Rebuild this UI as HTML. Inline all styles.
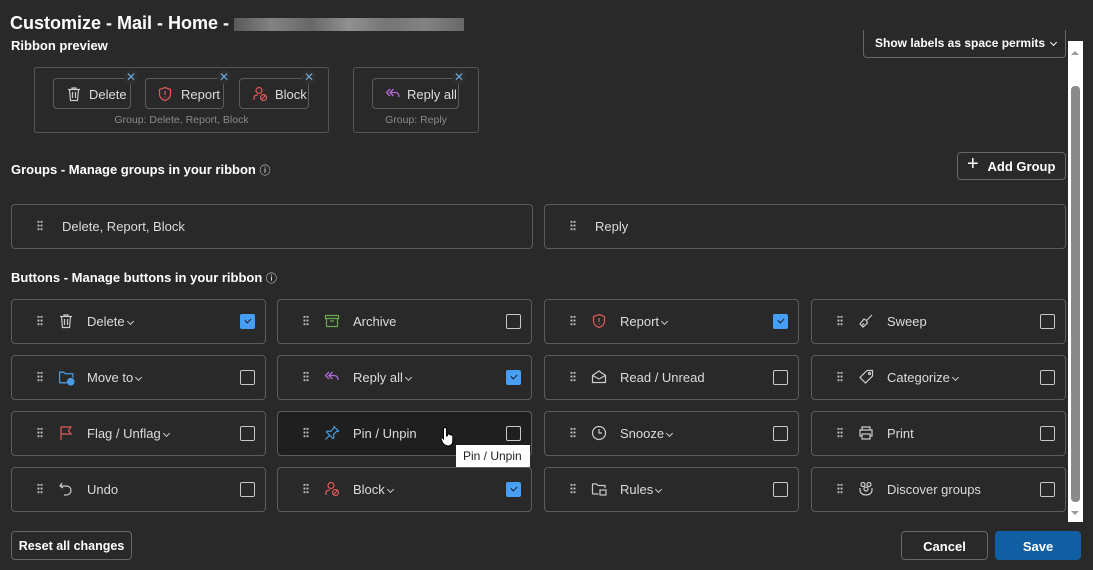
<!DOCTYPE html>
<html><head><meta charset="utf-8"><style>
*{box-sizing:border-box}
body{margin:0;width:1093px;height:570px;background:#292929;font-family:"Liberation Sans",sans-serif;color:#e8e8e8;overflow:hidden;position:relative}
.a{position:absolute}
.card{position:absolute;border:1px solid #5c5c5c;border-radius:4px;height:45px;width:255px;font-size:13px;color:#dcdcdc}
.card .g{position:absolute;left:25px;top:15px;width:6px;height:11px;background-image:radial-gradient(circle,#bbb 1px,transparent 1.2px);background-size:3px 3.7px}
.card svg{position:absolute;left:46px;top:13px}
.card .t{position:absolute;left:75px;top:14px}
.cb{position:absolute;right:10px;top:14px;width:15px;height:15px;border:1px solid #c8c8c8;border-radius:2px}
.cb.on{background:#479ef5;border-color:#479ef5}
.cb.on:after{content:"";position:absolute;left:4px;top:3px;width:5px;height:3px;border-left:1.5px solid #1a1a1a;border-bottom:1.5px solid #1a1a1a;transform:rotate(-45deg)}
.chev{display:inline-block;width:5px;height:5px;border-right:1px solid #ccc;border-bottom:1px solid #ccc;transform:rotate(45deg);margin:0 0 3px 3px;vertical-align:middle}
.h{position:absolute;font-weight:bold;font-size:13px;color:#fff}
.pb{position:absolute;height:31px;top:78px;border:1px solid #5c5c5c;border-radius:4px;font-size:13px;color:#ddd;padding:8px 0 0 0}
.x{position:absolute;top:-9px;right:-8px;width:14px;height:14px;color:#6fa8dc;font-size:12px;text-align:center;line-height:14px;background:#2f2f2f;border-radius:7px}
.btn{position:absolute;border:1px solid #666;border-radius:4px;font-size:13px;font-weight:bold;color:#fff;text-align:center}
</style></head><body>
<div class="a" style="left:10px;top:13px;font-size:18px;font-weight:bold;color:#fff">Customize - Mail - Home - <span style="display:inline-block;width:230px;height:13px;background:linear-gradient(90deg,#666,#999,#777,#aaa,#888,#999,#777);vertical-align:middle;opacity:.8"></span></div>
<div class="h" style="left:11px;top:38px">Ribbon preview</div>
<div class="a" style="left:863px;top:30px;width:203px;height:28px;border:1px solid #666;border-top:none;border-radius:0 0 4px 4px;font-size:12px;font-weight:bold;color:#fff;padding:6px 0 0 11px">Show labels as space permits <span class="chev" style="border-color:#fff"></span></div>

<div class="a" style="left:34px;top:67px;width:295px;height:66px;border:1px solid #555;border-radius:3px"></div>
<div class="a" style="left:34px;top:114px;width:295px;text-align:center;font-size:10.5px;color:#8a8a8a">Group: Delete, Report, Block</div>
<div class="a" style="left:353px;top:67px;width:126px;height:66px;border:1px solid #555;border-radius:3px"></div>
<div class="a" style="left:353px;top:114px;width:126px;text-align:center;font-size:10.5px;color:#8a8a8a">Group: Reply</div>
<div class="pb" style="left:53px;width:78px;top:78px"><svg class="a" style="left:12px;top:7px" width="16" height="16" viewBox="0 0 16 16" fill="none" stroke="#ccc" stroke-width="1.2"><path d="M2 3.5h12M6 3.5V2h4v1.5M3.5 3.5l1 11h7l1-11M6.5 6v6M9.5 6v6"/></svg><span style="position:absolute;left:35px">Delete</span><div class="x">✕</div></div>
<div class="pb" style="left:145px;width:79px"><svg class="a" style="left:11px;top:7px" width="16" height="16" viewBox="0 0 16 16" fill="none" stroke="#e05a5a" stroke-width="1.2"><path d="M8 1.5l5.5 2v4.5c0 3.5-2.5 5.5-5.5 6.5C5 13.5 2.5 11.5 2.5 8V3.5z M8 5v4M8 10.5v1"/></svg><span style="position:absolute;left:35px">Report</span><div class="x">✕</div></div>
<div class="pb" style="left:239px;width:70px"><svg class="a" style="left:12px;top:7px" width="16" height="16" viewBox="0 0 16 16" fill="none" stroke="#e05a5a" stroke-width="1.2"><circle cx="7" cy="4.5" r="3"/><path d="M2 14v-2c0-2 1.5-3 4-3"/><circle cx="11.5" cy="11.5" r="3"/><path d="M9.5 13.5l4-4"/></svg><span style="position:absolute;left:35px">Block</span><div class="x">✕</div></div>
<div class="pb" style="left:372px;width:87px"><svg class="a" style="left:12px;top:7px" width="16" height="16" viewBox="0 0 16 16" fill="none" stroke="#b36ad6" stroke-width="1.3"><path d="M5 3L1.5 6.5 5 10M8.5 3L5 6.5l3.5 3.5M5 6.5h5c2.5 0 4 1.5 4 4.5"/></svg><span style="position:absolute;left:34px">Reply all</span><div class="x">✕</div></div>

<div class="h" style="left:11px;top:162px">Groups - Manage groups in your ribbon <span style="font-weight:normal;font-size:11px">ⓘ</span></div>
<div class="btn" style="left:957px;top:152px;width:109px;height:28px;padding-top:6px"><span style="font-weight:normal;font-size:20px;position:absolute;left:9px;top:0px">+</span><span style="margin-left:20px">Add Group</span></div>
<div class="card" style="left:11px;top:204px;width:522px"><div class="g"></div><span class="t" style="left:50px">Delete, Report, Block</span></div>
<div class="card" style="left:544px;top:204px;width:522px"><div class="g"></div><span class="t" style="left:50px">Reply</span></div>

<div class="h" style="left:11px;top:270px">Buttons - Manage buttons in your ribbon <span style="font-weight:normal;font-size:11px">ⓘ</span></div>

<div class="card" style="left:11px;top:299px"><div class="g"></div><svg width="16" height="16" viewBox="0 0 16 16" fill="none" stroke="#ccc" stroke-width="1.2"><path d="M2 3.5h12M6 3.5V2h4v1.5M3.5 3.5l1 11h7l1-11M6.5 6v6M9.5 6v6"/></svg><span class="t">Delete<span class="chev"></span></span><div class="cb on"></div></div>
<div class="card" style="left:277px;top:299px"><div class="g"></div><svg width="16" height="16" viewBox="0 0 16 16" fill="none" stroke="#6aa84f" stroke-width="1.2"><path d="M1.5 2.5h13v3h-13zM2.5 5.5v8h11v-8M6 8h4"/></svg><span class="t">Archive</span><div class="cb"></div></div>
<div class="card" style="left:544px;top:299px"><div class="g"></div><svg width="16" height="16" viewBox="0 0 16 16" fill="none" stroke="#e05a5a" stroke-width="1.2"><path d="M8 1.5l5.5 2v4.5c0 3.5-2.5 5.5-5.5 6.5C5 13.5 2.5 11.5 2.5 8V3.5z M8 5v4M8 10.5v1"/></svg><span class="t">Report<span class="chev"></span></span><div class="cb on"></div></div>
<div class="card" style="left:811px;top:299px"><div class="g"></div><svg width="16" height="16" viewBox="0 0 16 16" fill="none" stroke="#ccc" stroke-width="1.2"><path d="M14 2L8.5 7.5M8.5 7.5L6 6 2 11l3 3 4.5-4z M4 12.5l2-2"/></svg><span class="t">Sweep</span><div class="cb"></div></div>

<div class="card" style="left:11px;top:355px"><div class="g"></div><svg width="17" height="17" viewBox="0 0 16 16" fill="none" stroke="#4a9be0" stroke-width="1.2"><path d="M1.5 13V3h4l1.5 1.5h7V8M1.5 13h7"/><circle cx="12" cy="12" r="3" fill="#4a9be0"/></svg><span class="t">Move to<span class="chev"></span></span><div class="cb"></div></div>
<div class="card" style="left:277px;top:355px"><div class="g"></div><svg width="16" height="16" viewBox="0 0 16 16" fill="none" stroke="#b36ad6" stroke-width="1.3"><path d="M5 3L1.5 6.5 5 10M8.5 3L5 6.5l3.5 3.5M5 6.5h5c2.5 0 4 1.5 4 4.5"/></svg><span class="t">Reply all<span class="chev"></span></span><div class="cb on"></div></div>
<div class="card" style="left:544px;top:355px"><div class="g"></div><svg width="16" height="16" viewBox="0 0 16 16" fill="none" stroke="#ccc" stroke-width="1.2"><path d="M1.5 6.5L8 2l6.5 4.5v7h-13zM1.5 6.5L8 10l6.5-3.5"/></svg><span class="t">Read / Unread</span><div class="cb"></div></div>
<div class="card" style="left:811px;top:355px"><div class="g"></div><svg width="16" height="16" viewBox="0 0 16 16" fill="none" stroke="#ccc" stroke-width="1.2"><path d="M9 1.5h5.5V7L7.5 14 2 8.5z"/><circle cx="11.5" cy="4.5" r="1"/></svg><span class="t">Categorize<span class="chev"></span></span><div class="cb"></div></div>

<div class="card" style="left:11px;top:411px"><div class="g"></div><svg width="16" height="16" viewBox="0 0 16 16" fill="none" stroke="#e05a5a" stroke-width="1.2"><path d="M3 15V2h10l-2.5 3.5L13 9H3"/></svg><span class="t">Flag / Unflag<span class="chev"></span></span><div class="cb"></div></div>
<div class="card" style="left:277px;top:411px;background:#1f1f1f"><div class="g"></div><svg width="16" height="16" viewBox="0 0 16 16" fill="none" stroke="#4a9be0" stroke-width="1.2"><path d="M10 1.5l4.5 4.5-2 .5-3 3 .5 3-1 1L2.5 7l1-1 3 .5 3-3zM5.5 10.5L1.5 14.5"/></svg><span class="t">Pin / Unpin</span><div class="cb"></div></div>
<div class="card" style="left:544px;top:411px"><div class="g"></div><svg width="16" height="16" viewBox="0 0 16 16" fill="none" stroke="#ccc" stroke-width="1.2"><circle cx="8" cy="8" r="6.5"/><path d="M8 4v4h3"/></svg><span class="t">Snooze<span class="chev"></span></span><div class="cb"></div></div>
<div class="card" style="left:811px;top:411px"><div class="g"></div><svg width="16" height="16" viewBox="0 0 16 16" fill="none" stroke="#ccc" stroke-width="1.2"><path d="M4 5V2h8v3M4 11H2V5h12v6h-2M4 9h8v5H4z"/></svg><span class="t">Print</span><div class="cb"></div></div>

<div class="card" style="left:11px;top:467px"><div class="g"></div><svg width="16" height="16" viewBox="0 0 16 16" fill="none" stroke="#ccc" stroke-width="1.2"><path d="M4 2L2 5l3 2M2 5h6.5a4.5 4.5 0 010 9H6"/></svg><span class="t">Undo</span><div class="cb"></div></div>
<div class="card" style="left:277px;top:467px"><div class="g"></div><svg width="16" height="16" viewBox="0 0 16 16" fill="none" stroke="#e05a5a" stroke-width="1.2"><circle cx="7" cy="4.5" r="3"/><path d="M2 14v-2c0-2 1.5-3 4-3"/><circle cx="11.5" cy="11.5" r="3"/><path d="M9.5 13.5l4-4"/></svg><span class="t">Block<span class="chev"></span></span><div class="cb on"></div></div>
<div class="card" style="left:544px;top:467px"><div class="g"></div><svg width="16" height="16" viewBox="0 0 16 16" fill="none" stroke="#ccc" stroke-width="1.2"><path d="M1.5 13V3h4l1.5 1.5h7V7M1.5 13h6"/><rect x="9" y="9" width="6" height="5"/></svg><span class="t">Rules<span class="chev"></span></span><div class="cb"></div></div>
<div class="card" style="left:811px;top:467px"><div class="g"></div><svg width="16" height="16" viewBox="0 0 16 16" fill="none" stroke="#ccc" stroke-width="1.2"><circle cx="5" cy="3.5" r="2"/><circle cx="11" cy="3.5" r="2"/><circle cx="8" cy="8" r="2"/><path d="M2 7v2c0 3 2.5 5 6 5s6-2 6-5V7"/></svg><span class="t">Discover groups</span><div class="cb"></div></div>

<div class="a" style="left:456px;top:445px;width:74px;height:22px;background:#fff;color:#222;font-size:12px;padding:4px 0 0 7px">Pin / Unpin</div>
<svg class="a" style="left:440px;top:426px" width="16" height="22" viewBox="0 0 16 22"><path d="M5 1.5c1 0 1.5.5 1.5 1.5v7l1-.3V8c.8-.4 1.6-.2 1.8.5.7-.4 1.6-.1 1.8.6.8-.3 1.7.1 1.7 1V15c0 3-2 5-4.5 5S4 19 2.5 16.5L1 13c-.3-1 .8-1.5 1.5-1L3.5 13V3c0-1 .5-1.5 1.5-1.5z" fill="#fff" stroke="#000" stroke-width="1"/></svg>

<div class="a" style="left:1068px;top:41px;width:15px;height:481px;background:#fff"></div>
<div class="a" style="left:1071px;top:86px;width:9px;height:416px;background:#8a8a8a;border-radius:4px"></div>
<div class="a" style="left:1071px;top:51px;width:0;height:0;border-left:4px solid transparent;border-right:4px solid transparent;border-bottom:4px solid #999"></div>
<div class="a" style="left:1071px;top:511px;width:0;height:0;border-left:4px solid transparent;border-right:4px solid transparent;border-top:4px solid #999"></div>

<div class="btn" style="left:11px;top:531px;width:121px;height:29px;padding-top:7px;font-size:12.5px">Reset all changes</div>
<div class="btn" style="left:901px;top:531px;width:87px;height:29px;padding-top:7px">Cancel</div>
<div class="btn" style="left:995px;top:531px;width:86px;height:29px;padding-top:7px;background:#115ea3;border-color:#115ea3">Save</div>
</body></html>
